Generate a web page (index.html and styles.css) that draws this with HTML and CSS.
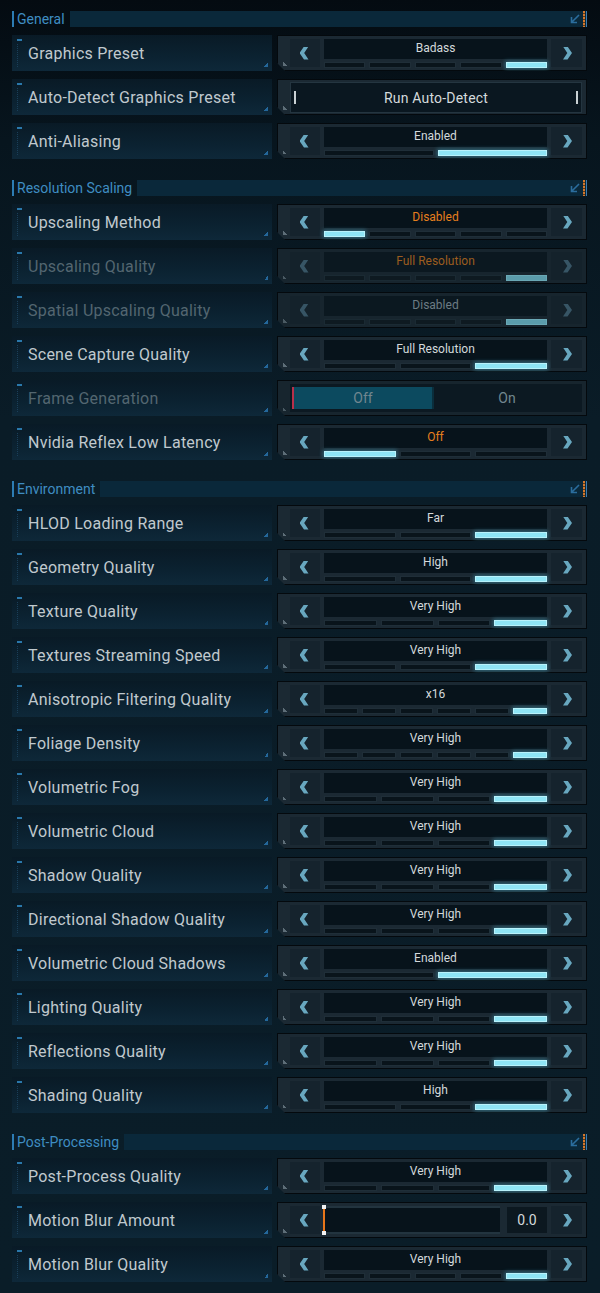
FILE: index.html
```html
<!DOCTYPE html>
<html>
<head>
<meta charset="utf-8">
<link rel="stylesheet" href="styles.css">
</head>
<body>
<div class="page">

<section class="sec">
  <div class="sec-head"><span class="sec-title">General</span><div class="sec-bar"><svg class="sec-icon" width="10" height="10" viewBox="0 0 10 10"><path d="M9 1 L2.2 7.8 M1.5 3 V8.5 H7" stroke="#2b6d9d" stroke-width="1.6" fill="none"/></svg><i class="dash"></i><i class="bline"></i></div></div>
  <div class="rows">
    <div class="row"><div class="label">Graphics Preset</div>
      <div class="ctrl"><div class="arr l"></div><div class="mid"><div class="val">Badass</div><div class="segs"><i></i><i></i><i></i><i></i><i class="on"></i></div></div><div class="arr r"></div></div></div>
    <div class="row"><div class="label">Auto-Detect Graphics Preset</div>
      <div class="ctrl btn"><div class="btnbox">Run Auto-Detect</div></div></div>
    <div class="row"><div class="label">Anti-Aliasing</div>
      <div class="ctrl"><div class="arr l"></div><div class="mid"><div class="val">Enabled</div><div class="segs"><i></i><i class="on"></i></div></div><div class="arr r"></div></div></div>
  </div>
</section>

<section class="sec">
  <div class="sec-head"><span class="sec-title">Resolution Scaling</span><div class="sec-bar"><svg class="sec-icon" width="10" height="10" viewBox="0 0 10 10"><path d="M9 1 L2.2 7.8 M1.5 3 V8.5 H7" stroke="#2b6d9d" stroke-width="1.6" fill="none"/></svg><i class="dash"></i><i class="bline"></i></div></div>
  <div class="rows">
    <div class="row"><div class="label">Upscaling Method</div>
      <div class="ctrl"><div class="arr l"></div><div class="mid"><div class="val orange">Disabled</div><div class="segs"><i class="on"></i><i></i><i></i><i></i><i></i></div></div><div class="arr r"></div></div></div>
    <div class="row dis"><div class="label">Upscaling Quality</div>
      <div class="ctrl"><div class="arr l"></div><div class="mid"><div class="val orange">Full Resolution</div><div class="segs"><i></i><i></i><i></i><i></i><i class="on"></i></div></div><div class="arr r"></div></div></div>
    <div class="row dis"><div class="label">Spatial Upscaling Quality</div>
      <div class="ctrl"><div class="arr l"></div><div class="mid"><div class="val">Disabled</div><div class="segs"><i></i><i></i><i></i><i></i><i class="on"></i></div></div><div class="arr r"></div></div></div>
    <div class="row"><div class="label">Scene Capture Quality</div>
      <div class="ctrl"><div class="arr l"></div><div class="mid"><div class="val">Full Resolution</div><div class="segs"><i></i><i></i><i class="on"></i></div></div><div class="arr r"></div></div></div>
    <div class="row dis"><div class="label">Frame Generation</div>
      <div class="ctrl toggle"><div class="tg"><div class="opt sel">Off</div><div class="opt">On</div></div></div></div>
    <div class="row"><div class="label">Nvidia Reflex Low Latency</div>
      <div class="ctrl"><div class="arr l"></div><div class="mid"><div class="val orange">Off</div><div class="segs"><i class="on"></i><i></i><i></i></div></div><div class="arr r"></div></div></div>
  </div>
</section>

<section class="sec">
  <div class="sec-head"><span class="sec-title">Environment</span><div class="sec-bar"><svg class="sec-icon" width="10" height="10" viewBox="0 0 10 10"><path d="M9 1 L2.2 7.8 M1.5 3 V8.5 H7" stroke="#2b6d9d" stroke-width="1.6" fill="none"/></svg><i class="dash"></i><i class="bline"></i></div></div>
  <div class="rows">
    <div class="row"><div class="label">HLOD Loading Range</div>
      <div class="ctrl"><div class="arr l"></div><div class="mid"><div class="val">Far</div><div class="segs"><i></i><i></i><i class="on"></i></div></div><div class="arr r"></div></div></div>
    <div class="row"><div class="label">Geometry Quality</div>
      <div class="ctrl"><div class="arr l"></div><div class="mid"><div class="val">High</div><div class="segs"><i></i><i></i><i class="on"></i></div></div><div class="arr r"></div></div></div>
    <div class="row"><div class="label">Texture Quality</div>
      <div class="ctrl"><div class="arr l"></div><div class="mid"><div class="val">Very High</div><div class="segs"><i></i><i></i><i></i><i class="on"></i></div></div><div class="arr r"></div></div></div>
    <div class="row"><div class="label">Textures Streaming Speed</div>
      <div class="ctrl"><div class="arr l"></div><div class="mid"><div class="val">Very High</div><div class="segs"><i></i><i></i><i class="on"></i></div></div><div class="arr r"></div></div></div>
    <div class="row"><div class="label">Anisotropic Filtering Quality</div>
      <div class="ctrl"><div class="arr l"></div><div class="mid"><div class="val">x16</div><div class="segs"><i></i><i></i><i></i><i></i><i></i><i class="on"></i></div></div><div class="arr r"></div></div></div>
    <div class="row"><div class="label">Foliage Density</div>
      <div class="ctrl"><div class="arr l"></div><div class="mid"><div class="val">Very High</div><div class="segs"><i></i><i></i><i></i><i></i><i></i><i class="on"></i></div></div><div class="arr r"></div></div></div>
    <div class="row"><div class="label">Volumetric Fog</div>
      <div class="ctrl"><div class="arr l"></div><div class="mid"><div class="val">Very High</div><div class="segs"><i></i><i></i><i></i><i class="on"></i></div></div><div class="arr r"></div></div></div>
    <div class="row"><div class="label">Volumetric Cloud</div>
      <div class="ctrl"><div class="arr l"></div><div class="mid"><div class="val">Very High</div><div class="segs"><i></i><i></i><i></i><i class="on"></i></div></div><div class="arr r"></div></div></div>
    <div class="row"><div class="label">Shadow Quality</div>
      <div class="ctrl"><div class="arr l"></div><div class="mid"><div class="val">Very High</div><div class="segs"><i></i><i></i><i></i><i class="on"></i></div></div><div class="arr r"></div></div></div>
    <div class="row"><div class="label">Directional Shadow Quality</div>
      <div class="ctrl"><div class="arr l"></div><div class="mid"><div class="val">Very High</div><div class="segs"><i></i><i></i><i></i><i class="on"></i></div></div><div class="arr r"></div></div></div>
    <div class="row"><div class="label">Volumetric Cloud Shadows</div>
      <div class="ctrl"><div class="arr l"></div><div class="mid"><div class="val">Enabled</div><div class="segs"><i></i><i class="on"></i></div></div><div class="arr r"></div></div></div>
    <div class="row"><div class="label">Lighting Quality</div>
      <div class="ctrl"><div class="arr l"></div><div class="mid"><div class="val">Very High</div><div class="segs"><i></i><i></i><i></i><i class="on"></i></div></div><div class="arr r"></div></div></div>
    <div class="row"><div class="label">Reflections Quality</div>
      <div class="ctrl"><div class="arr l"></div><div class="mid"><div class="val">Very High</div><div class="segs"><i></i><i></i><i></i><i class="on"></i></div></div><div class="arr r"></div></div></div>
    <div class="row"><div class="label">Shading Quality</div>
      <div class="ctrl"><div class="arr l"></div><div class="mid"><div class="val">High</div><div class="segs"><i></i><i></i><i class="on"></i></div></div><div class="arr r"></div></div></div>
  </div>
</section>

<section class="sec">
  <div class="sec-head"><span class="sec-title">Post-Processing</span><div class="sec-bar"><svg class="sec-icon" width="10" height="10" viewBox="0 0 10 10"><path d="M9 1 L2.2 7.8 M1.5 3 V8.5 H7" stroke="#2b6d9d" stroke-width="1.6" fill="none"/></svg><i class="dash"></i><i class="bline"></i></div></div>
  <div class="rows">
    <div class="row"><div class="label">Post-Process Quality</div>
      <div class="ctrl"><div class="arr l"></div><div class="mid"><div class="val">Very High</div><div class="segs"><i></i><i></i><i></i><i class="on"></i></div></div><div class="arr r"></div></div></div>
    <div class="row"><div class="label">Motion Blur Amount</div>
      <div class="ctrl slider"><div class="arr l"></div><div class="track"><span class="thumb"></span></div><div class="num">0.0</div><div class="arr r"></div></div></div>
    <div class="row"><div class="label">Motion Blur Quality</div>
      <div class="ctrl"><div class="arr l"></div><div class="mid"><div class="val">Very High</div><div class="segs"><i></i><i></i><i></i><i></i><i class="on"></i></div></div><div class="arr r"></div></div></div>
  </div>
</section>

</div>
</body>
</html>
```

FILE: styles.css
```css
* { box-sizing: border-box; }
html, body { margin: 0; padding: 0; }
body {
  width: 600px;
  height: 1293px;
  overflow: hidden;
  background: linear-gradient(180deg, #040b11 0px, #07151e 140px, #0a1c27 420px, #0a1d28 100%);
  font-family: Roboto, "Noto Sans", "Liberation Sans", sans-serif;
}
.page { padding: 11px 13px 0 12px; }
.sec + .sec { margin-top: 21px; }

.sec-head { display: flex; height: 16px; margin-bottom: 8px; }
.sec-title {
  border-left: 2px solid #2d7cb3;
  padding-left: 3px;
  color: #3f8dc2;
  font-size: 14px;
  line-height: 16px;
}
.sec-bar {
  flex: 1;
  margin-left: 5px;
  background: #0a283a;
  display: flex;
  justify-content: flex-end;
  align-items: center;
}
.sec-icon { margin-right: 3px; }
.sec-bar .dash {
  width: 2px; height: 16px;
  background: repeating-linear-gradient(180deg, #d6782a 0 2px, #5a3a1c 2px 3px);
  margin-right: 1px;
}
.sec-bar .bline { width: 1px; height: 16px; background: #3b7db3; }

.rows { display: flex; flex-direction: column; gap: 8px; }
.row { display: flex; height: 36px; gap: 5px; }

.label {
  width: 260px;
  position: relative;
  display: flex;
  align-items: center;
  padding-left: 16px;
  color: #c0c9ce;
  font-size: 16px;
  letter-spacing: 0.25px;
  background:
    linear-gradient(135deg, transparent 50%, #24679a 50%) no-repeat right 4px bottom 4px / 4px 4px,
    linear-gradient(180deg, #091a26 0%, #0b2231 60%, #0e2839 100%);
}
.label::before {
  content: "";
  position: absolute;
  left: 5px; top: 4px;
  width: 5px; height: 2px;
  background: #2a78ab;
}
.label::after {
  content: "";
  position: absolute;
  left: 5px; top: 9px; bottom: 4px;
  border-left: 1px dotted #1a3f59;
}

.ctrl {
  width: 310px;
  display: flex;
  gap: 4px;
  padding: 2px 4px 2px 12px;
  border: 1px solid #04090d;
  background:
    linear-gradient(45deg, #5e6e78 50%, transparent 50%) no-repeat left 5px bottom 4px / 4px 4px,
    #1b2933;
  clip-path: polygon(0 0, 100% 0, 100% 100%, 8px 100%, 0 calc(100% - 8px));
}
.arr {
  width: 30px;
  margin: 1px 0;
  background: #15232d;
  display: flex;
  align-items: center;
  justify-content: center;
}
.arr.r { width: 31px; }
.arr::before {
  content: "";
  width: 9px; height: 13px;
  background: #68a7bf;
}
.arr.l::before { clip-path: polygon(100% 0, 52% 50%, 100% 100%, 50% 100%, 0 50%, 50% 0); margin-right: 2px; }
.arr.r::before { clip-path: polygon(0 0, 48% 50%, 0 100%, 50% 100%, 100% 50%, 50% 0); margin-left: 2px; }

.mid { flex: 1; display: flex; flex-direction: column; gap: 3px; padding-top: 1px; }
.val {
  height: 21px;
  background: #07131b;
  color: #d3d9db;
  font-size: 12px;
  display: flex;
  align-items: center;
  justify-content: center;
  padding-bottom: 2px;
}
.val.orange { color: #e67f1e; }
.segs { height: 6px; display: flex; gap: 4px; }
.segs i {
  flex: 1;
  background: #09141b;
  border: 1px solid #1f2e38;
}
.segs i.on {
  background: #8fe5f5;
  border-color: #b8f2fb;
  box-shadow: 0 0 4px 1px rgba(80, 195, 225, 0.45);
}

/* disabled rows */
.row.dis .label { color: #536670; }
.row.dis .ctrl { background:
    linear-gradient(45deg, #4a5a63 50%, transparent 50%) no-repeat left 5px bottom 4px / 4px 4px,
    #17252e; }
.row.dis .arr { background: #14222b; }
.row.dis .arr::before { background: #375565; }
.row.dis .val { background: #0b1820; color: #6c7c84; }
.row.dis .val.orange { color: #9c5d1f; }
.row.dis .segs i { background: #0e1a21; border-color: #1a2a33; }
.row.dis .segs i.on { background: #5b9cab; border-color: #6aa8b5; box-shadow: none; }

/* button */
.ctrl.btn { padding: 2px 4px 1px 12px; }
.btnbox {
  flex: 1;
  position: relative;
  background: #0a1720;
  border: 1px solid #243540;
  display: flex;
  align-items: center;
  justify-content: center;
  color: #d4dadc;
  font-size: 14px;
  letter-spacing: 0.2px;
}
.btnbox::before, .btnbox::after {
  content: "";
  position: absolute;
  top: 8px; bottom: 8px;
  width: 2px;
  background: #c9d1d4;
}
.btnbox::before { left: 3px; }
.btnbox::after { right: 3px; }

/* toggle */
.ctrl.toggle { padding: 2px 4px 2px 12px; }
.tg {
  flex: 1;
  display: flex;
  background: #0c1922;
  padding: 3px 2px 3px 2px;
  margin: 1px 0;
}
.opt {
  flex: 1;
  display: flex;
  align-items: center;
  justify-content: center;
  color: #71868f;
  font-size: 14px;
}
.opt.sel {
  flex: 0 0 142px;
  background: #0c4a5f;
  border-left: 2px solid #b8304a;
  border-right: 2px solid #0a2e3c;
}

/* slider */
.track {
  width: 177px;
  margin: 1px 3px 1px -1px;
  position: relative;
  background: #07131b;
  border-top: 2px solid #22343f;
  border-bottom: 2px solid #22343f;
}
.thumb {
  position: absolute;
  left: 0; top: -2px; bottom: -2px;
  width: 2px;
  background: #e8761a;
}
.thumb::before, .thumb::after {
  content: "";
  position: absolute;
  left: -1px;
  width: 4px; height: 4px;
  background: #f2f2f2;
}
.thumb::before { top: -1px; }
.thumb::after { bottom: -1px; }
.num {
  width: 40px;
  margin: 2px 0;
  background: #0c1820;
  color: #d4dadc;
  font-size: 14px;
  display: flex;
  align-items: center;
  justify-content: center;
}
```
